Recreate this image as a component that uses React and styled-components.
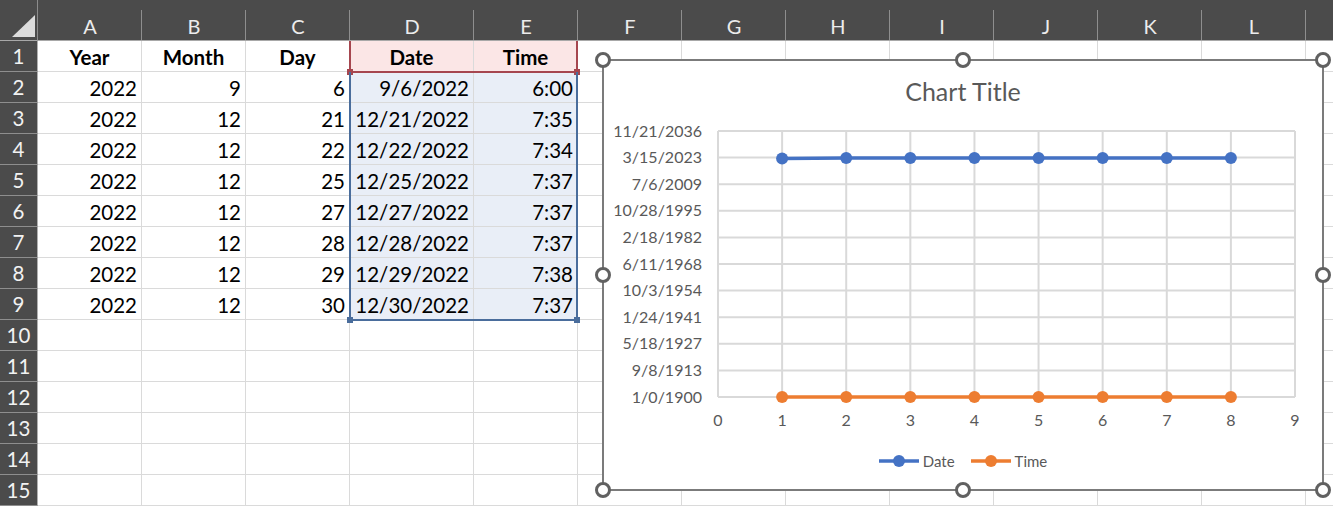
import React from "react";
import styled, { createGlobalStyle } from "styled-components";

const GlobalStyle = createGlobalStyle`
  html, body {
    margin: 0;
    padding: 0;
    background: #ffffff;
    overflow: hidden;
  }
  body {
    font-family: Lato, "Open Sans", "Noto Sans", sans-serif;
  }
`;

// the last column only peeks in at the right edge, so its letter stays off screen
const COLUMNS = ["A", "B", "C", "D", "E", "F", "G", "H", "I", "J", "K", "L", ""];
const ROW_COUNT = 15;

const sheet = [
  ["Year", "Month", "Day", "Date", "Time"],
  [2022, 9, 6, "9/6/2022", "6:00"],
  [2022, 12, 21, "12/21/2022", "7:35"],
  [2022, 12, 22, "12/22/2022", "7:34"],
  [2022, 12, 25, "12/25/2022", "7:37"],
  [2022, 12, 27, "12/27/2022", "7:37"],
  [2022, 12, 28, "12/28/2022", "7:37"],
  [2022, 12, 29, "12/29/2022", "7:38"],
  [2022, 12, 30, "12/30/2022", "7:37"],
];

// date serials and day fractions behind the two chart series
const dateSeries = [44810, 44916, 44917, 44920, 44922, 44923, 44924, 44925];
const timeSeries = [0.25, 0.316, 0.315, 0.317, 0.317, 0.317, 0.318, 0.317];

const yLabels = [
  "11/21/2036",
  "3/15/2023",
  "7/6/2009",
  "10/28/1995",
  "2/18/1982",
  "6/11/1968",
  "10/3/1954",
  "1/24/1941",
  "5/18/1927",
  "9/8/1913",
  "1/0/1900",
];

const HEADER_BG = "#4b4b4b";

const Sheet = styled.div`
  position: relative;
  width: 1333px;
  height: 508px;
  overflow: hidden;
`;

const Grid = styled.div`
  display: grid;
  grid-template-columns: 38px repeat(3, 104px) 124px repeat(9, 104px);
  grid-template-rows: 41px repeat(${ROW_COUNT}, 31px);
`;

const Corner = styled.div`
  grid-row: 1;
  grid-column: 1;
  position: relative;
  background: ${HEADER_BG};
  border-bottom: 1px solid #a8a8a8;
  border-right: 1px solid #8c8c8c;

  &::after {
    content: "";
    position: absolute;
    left: 12px;
    top: 15px;
    width: 23px;
    height: 22px;
    background: #dcdcdc;
    clip-path: polygon(100% 0, 100% 100%, 0 100%);
  }
`;

const ColHead = styled.div`
  grid-row: 1;
  grid-column: ${(p) => p.$c};
  position: relative;
  background: ${HEADER_BG};
  border-bottom: 1px solid #a8a8a8;
  display: flex;
  align-items: center;
  justify-content: center;
  padding-top: 12px;
  color: #ececec;
  font-size: 20px;

  &::after {
    content: "";
    position: absolute;
    right: 0;
    top: 10px;
    bottom: 0;
    width: 1px;
    background: #8e8e8e;
  }
`;

const RowHead = styled.div`
  grid-row: ${(p) => p.$r};
  grid-column: 1;
  background: ${HEADER_BG};
  border-bottom: 1px solid #8e8e8e;
  border-right: 1px solid #b0b0b0;
  display: flex;
  align-items: center;
  justify-content: center;
  color: #f2f2f2;
  font-size: 20.5px;
`;

const Cell = styled.div`
  grid-row: ${(p) => p.$r};
  grid-column: ${(p) => p.$c};
  box-sizing: border-box;
  border-right: 1px solid #dadada;
  border-bottom: 1px solid #dadada;
  background: ${(p) => p.$fill || "#ffffff"};
  display: flex;
  align-items: center;
  justify-content: ${(p) => (p.$center ? "center" : "flex-end")};
  padding: 1px 4px 0;
  font-size: 20.5px;
  font-weight: ${(p) => (p.$bold ? 700 : 400)};
  color: #000000;
  white-space: nowrap;
`;

const Selection = styled.div`
  grid-row: ${(p) => p.$rows};
  grid-column: ${(p) => p.$cols};
  position: relative;
  z-index: 2;
  margin: 0 0 -1px -1px;
  border: 2px solid ${(p) => p.$color};
  border-top: none;
  pointer-events: none;
`;

const Grip = styled.span`
  position: absolute;
  bottom: -4px;
  ${(p) => (p.$side === "left" ? "left: -4px;" : "right: -4px;")}
  width: 6px;
  height: 6px;
  background: ${(p) => p.$color};
`;

const ChartObject = styled.div`
  position: absolute;
  left: 603px;
  top: 60px;
  width: 720px;
  height: 430px;
  z-index: 5;
`;

const ChartFrame = styled.div`
  box-sizing: border-box;
  margin: -1px;
  width: calc(100% + 2px);
  height: calc(100% + 2px);
  border: 2px solid #7b7b7b;
  background: #ffffff;
  display: flex;
  flex-direction: column;
`;

const ChartTitle = styled.div`
  height: 60px;
  box-sizing: border-box;
  padding-top: 16px;
  text-align: center;
  font-size: 25px;
  line-height: 28px;
  color: #595959;
`;

const Legend = styled.div`
  height: 40px;
  display: flex;
  align-items: center;
  justify-content: center;
  gap: 16px;
  font-size: 15px;
  color: #595959;
`;

const LegendItem = styled.div`
  display: flex;
  align-items: center;
  gap: 4px;
`;

const Handle = styled.span`
  position: absolute;
  left: ${(p) => p.$x};
  top: ${(p) => p.$y};
  width: 10px;
  height: 10px;
  border: 3px solid #616161;
  border-radius: 50%;
  background: #ffffff;
  transform: translate(-50%, -50%);
`;

function LegendMarker({ color }) {
  return (
    <svg width="40" height="14" viewBox="0 0 40 14">
      <line x1="0" y1="7" x2="40" y2="7" stroke={color} strokeWidth="3.5" />
      <circle cx="20" cy="7" r="6" fill={color} />
    </svg>
  );
}

function PlotArea() {
  const left = 114;
  const right = 691;
  const top = 10;
  const bottom = 276;
  const xAt = (i) => left + (i * (right - left)) / 9;
  const yAt = (v) => bottom - (v / 50000) * (bottom - top);
  const step = (bottom - top) / 10;

  const series = [
    { values: dateSeries, color: "#4472c4" },
    { values: timeSeries, color: "#ed7d31" },
  ];

  return (
    <svg width="718" height="320" viewBox="0 0 718 320">
      {yLabels.map((label, k) => (
        <line
          key={`h${k}`}
          x1={left}
          x2={right}
          y1={top + k * step}
          y2={top + k * step}
          stroke="#d9d9d9"
          strokeWidth="2"
        />
      ))}
      {Array.from({ length: 10 }, (_, i) => (
        <line
          key={`v${i}`}
          x1={xAt(i)}
          x2={xAt(i)}
          y1={top}
          y2={bottom}
          stroke="#d9d9d9"
          strokeWidth="2"
        />
      ))}

      <g fill="#595959" fontSize="16" fontFamily="Lato, 'Open Sans', sans-serif">
        {yLabels.map((label, k) => (
          <text key={label} x="98" y={top + k * step + 5.5} textAnchor="end">
            {label}
          </text>
        ))}
        {Array.from({ length: 10 }, (_, i) => (
          <text key={`x${i}`} x={xAt(i)} y="305" textAnchor="middle">
            {i}
          </text>
        ))}
      </g>

      {series.map(({ values, color }) => (
        <g key={color}>
          <polyline
            points={values.map((v, i) => `${xAt(i + 1)},${yAt(v)}`).join(" ")}
            fill="none"
            stroke={color}
            strokeWidth="3.5"
          />
          {values.map((v, i) => (
            <circle key={i} cx={xAt(i + 1)} cy={yAt(v)} r="6" fill={color} />
          ))}
        </g>
      ))}
    </svg>
  );
}

function Chart() {
  const handles = [
    ["0%", "0%"],
    ["50%", "0%"],
    ["100%", "0%"],
    ["0%", "50%"],
    ["100%", "50%"],
    ["0%", "100%"],
    ["50%", "100%"],
    ["100%", "100%"],
  ];

  return (
    <ChartObject>
      <ChartFrame>
        <ChartTitle>Chart Title</ChartTitle>
        <PlotArea />
        <Legend>
          <LegendItem>
            <LegendMarker color="#4472c4" />
            Date
          </LegendItem>
          <LegendItem>
            <LegendMarker color="#ed7d31" />
            Time
          </LegendItem>
        </Legend>
      </ChartFrame>
      {handles.map(([x, y]) => (
        <Handle key={`${x}-${y}`} $x={x} $y={y} />
      ))}
    </ChartObject>
  );
}

function cellFill(row, col) {
  if (col === 3 || col === 4) {
    if (row === 0) return "#fbe6e6";
    if (row <= 8) return "#e9eef7";
  }
  return undefined;
}

export default function App() {
  const cells = [];
  for (let r = 0; r < ROW_COUNT; r++) {
    for (let c = 0; c < COLUMNS.length; c++) {
      const value = sheet[r] ? sheet[r][c] : undefined;
      cells.push(
        <Cell
          key={`${r}-${c}`}
          $r={r + 2}
          $c={c + 2}
          $bold={r === 0}
          $center={r === 0}
          $fill={cellFill(r, c)}
        >
          {value}
        </Cell>
      );
    }
  }

  return (
    <Sheet>
      <GlobalStyle />
      <Grid>
        <Corner />
        {COLUMNS.map((letter, c) => (
          <ColHead key={c} $c={c + 2}>
            {letter}
          </ColHead>
        ))}
        {Array.from({ length: ROW_COUNT }, (_, r) => (
          <RowHead key={r} $r={r + 2}>
            {r + 1}
          </RowHead>
        ))}
        {cells}
        <Selection $rows="2 / 3" $cols="5 / 7" $color="#a6464f">
          <Grip $side="left" $color="#a6464f" />
          <Grip $side="right" $color="#a6464f" />
        </Selection>
        <Selection $rows="3 / 11" $cols="5 / 7" $color="#4a6d9c">
          <Grip $side="left" $color="#4a6d9c" />
          <Grip $side="right" $color="#4a6d9c" />
        </Selection>
      </Grid>
      <Chart />
    </Sheet>
  );
}
